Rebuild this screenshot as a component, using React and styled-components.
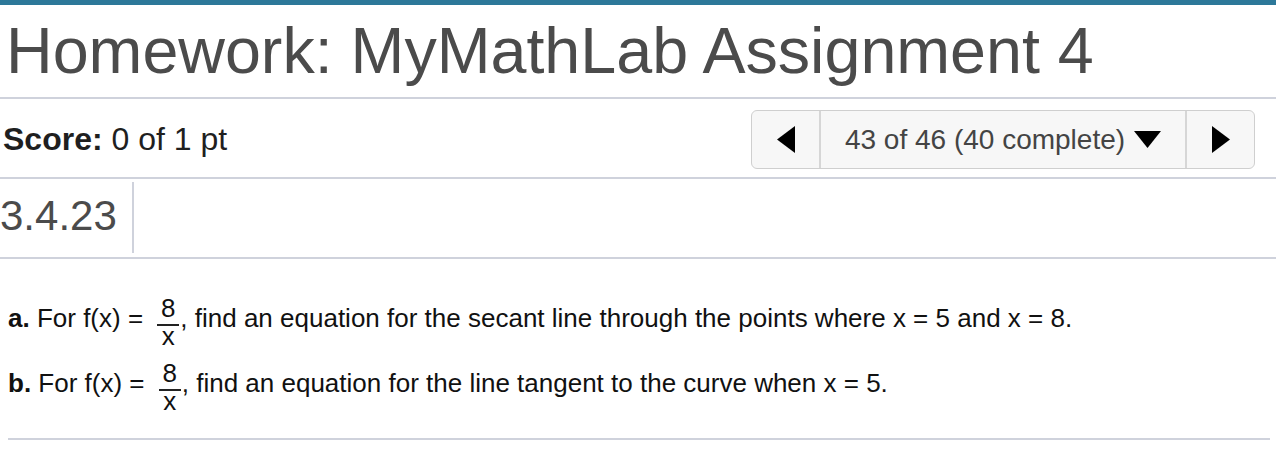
import React from 'react';
import styled, { createGlobalStyle } from 'styled-components';

const GlobalStyle = createGlobalStyle`
  html, body {
    margin: 0;
    padding: 0;
    background: #fff;
  }
  body {
    font-family: "Liberation Sans", Arial, Helvetica, sans-serif;
    color: #222;
  }
`;

const Page = styled.div`
  width: 1276px;
`;

const TopBar = styled.div`
  height: 5px;
  background: #2d7899;
`;

const Title = styled.h1`
  margin: 0;
  padding: 9px 0 9px 6px;
  font-size: 64.6px;
  font-weight: normal;
  line-height: normal;
  color: #4b4b4b;
  border-bottom: 2px solid #cfd2dc;
`;

const ScoreRow = styled.div`
  display: flex;
  align-items: center;
  justify-content: space-between;
  padding: 11px 21px 8px 3px;
  border-bottom: 2px solid #cfd2dc;
`;

const Score = styled.div`
  font-size: 32px;
  color: #1f1f1f;

  b {
    font-weight: bold;
  }
`;

const Nav = styled.div`
  display: flex;
  height: 57px;
  border: 1px solid #cfcfcf;
  border-radius: 6px;
  background: #f7f7f7;
`;

const NavButton = styled.div`
  width: 67px;
  display: flex;
  align-items: center;
  justify-content: center;
  border-left: ${(p) => (p.$divider ? '2px solid #d6d6d6' : 'none')};
`;

const NavCenter = styled.div`
  width: 364px;
  display: flex;
  align-items: center;
  justify-content: center;
  gap: 9px;
  border-left: 2px solid #d6d6d6;
  font-size: 28px;
  color: #444;
`;

const Arrow = ({ dir }) => (
  <svg width="18" height="27" viewBox="0 0 18 27">
    {dir === 'left' ? (
      <polygon points="18,0 18,27 0,13.5" fill="#000" />
    ) : (
      <polygon points="0,0 0,27 18,13.5" fill="#000" />
    )}
  </svg>
);

const Caret = () => (
  <svg width="27" height="17" viewBox="0 0 27 17">
    <polygon points="0,0 27,0 13.5,17" fill="#000" />
  </svg>
);

const IdRow = styled.div`
  display: flex;
  border-bottom: 2px solid #cfd2dc;
  padding: 3px 0 4px;
`;

const QuestionId = styled.div`
  font-size: 42px;
  color: #4b4b4b;
  padding: 8px 15px 12px 0;
  border-right: 2px solid #cfd2dc;
  line-height: 51px;
`;

const Problem = styled.div`
  margin: 0 6px 0 8px;
  padding: 27px 0 22px;
  border-bottom: 2px solid #cfd2dc;
`;

const Part = styled.div`
  font-size: 26px;
  line-height: 65px;
  height: 65px;
  color: #111;
  white-space: nowrap;

  b {
    font-weight: bold;
  }
`;

const Fraction = styled.span`
  display: inline-flex;
  flex-direction: column;
  align-items: center;
  vertical-align: 10px;
  line-height: 26px;
  margin: 0 1px 0 7px;
`;

const Bar = styled.span`
  width: 22px;
  height: 2px;
  background: #222;
  margin-top: 3px;
`;

const Denominator = styled.span`
  margin-top: -3px;
`;

const Frac = ({ num, den }) => (
  <Fraction>
    <span>{num}</span>
    <Bar />
    <Denominator>{den}</Denominator>
  </Fraction>
);

export default function App() {
  return (
    <Page>
      <GlobalStyle />
      <TopBar />
      <Title>Homework: MyMathLab Assignment 4</Title>
      <ScoreRow>
        <Score>
          <b>Score:</b> 0 of 1 pt
        </Score>
        <Nav>
          <NavButton>
            <Arrow dir="left" />
          </NavButton>
          <NavCenter>
            <span>43 of 46 (40 complete)</span>
            <Caret />
          </NavCenter>
          <NavButton $divider>
            <Arrow dir="right" />
          </NavButton>
        </Nav>
      </ScoreRow>
      <IdRow>
        <QuestionId>3.4.23</QuestionId>
      </IdRow>
      <Problem>
        <Part>
          <b>a.</b> For f(x) = <Frac num="8" den="x" />, find an equation for the secant line through the points where x = 5 and x = 8.
        </Part>
        <Part>
          <b>b.</b> For f(x) = <Frac num="8" den="x" />, find an equation for the line tangent to the curve when x = 5.
        </Part>
      </Problem>
    </Page>
  );
}
